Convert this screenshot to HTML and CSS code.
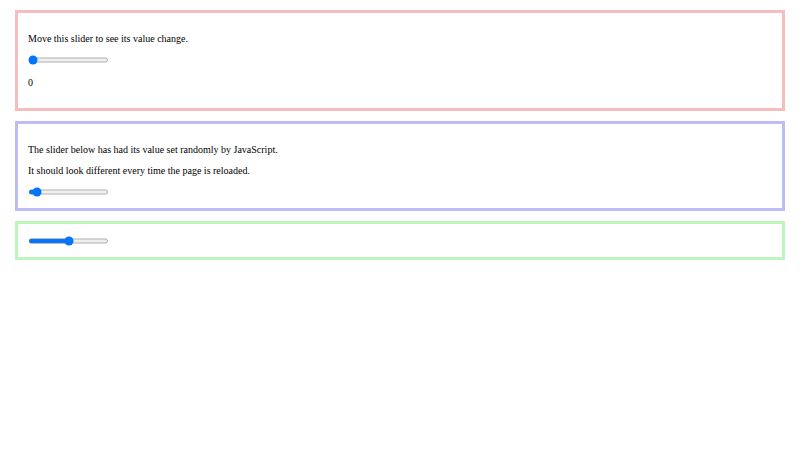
FILE: index.html
```html
<!DOCTYPE html>
<html>
<head>
<meta charset="utf-8">
<link rel="stylesheet" href="styles.css">
</head>
<body>
<div class="box box-red">
  <p class="text">Move this slider to see its value change.</p>
  <input class="slider" type="range" min="0" max="100" value="0">
  <p class="text">0</p>
</div>
<div class="box box-blue">
  <p class="text">The slider below has had its value set randomly by JavaScript.</p>
  <p class="text">It should look different every time the page is reloaded.</p>
  <input class="slider" type="range" min="0" max="100" value="6">
</div>
<div class="box box-green">
  <input class="slider" type="range" min="0" max="100" value="51">
</div>
</body>
</html>
```
FILE: styles.css
```css
html, body {
  background: #ffffff;
}
body {
  margin: 0;
  padding: 0 5px;
  font-family: "Liberation Serif", "Times New Roman", serif;
  font-size: 10px;
  color: #000000;
}
.box {
  margin: 10px;
  padding: 10px;
  border: 3px solid;
}
.box-red { border-color: #f6bdbd; }
.box-blue { border-color: #bdbdf4; }
.box-green { border-color: #bdf6bd; }
.text {
  margin: 10px 0;
  font-size: 10px;
  line-height: 11px;
}
.slider {
  display: block;
  zoom: 0.625;
  margin: 2px 0;
}
.text + .slider {
  margin-top: 17.6px;
}
.slider + .text {
  margin-top: 12px;
}
```
